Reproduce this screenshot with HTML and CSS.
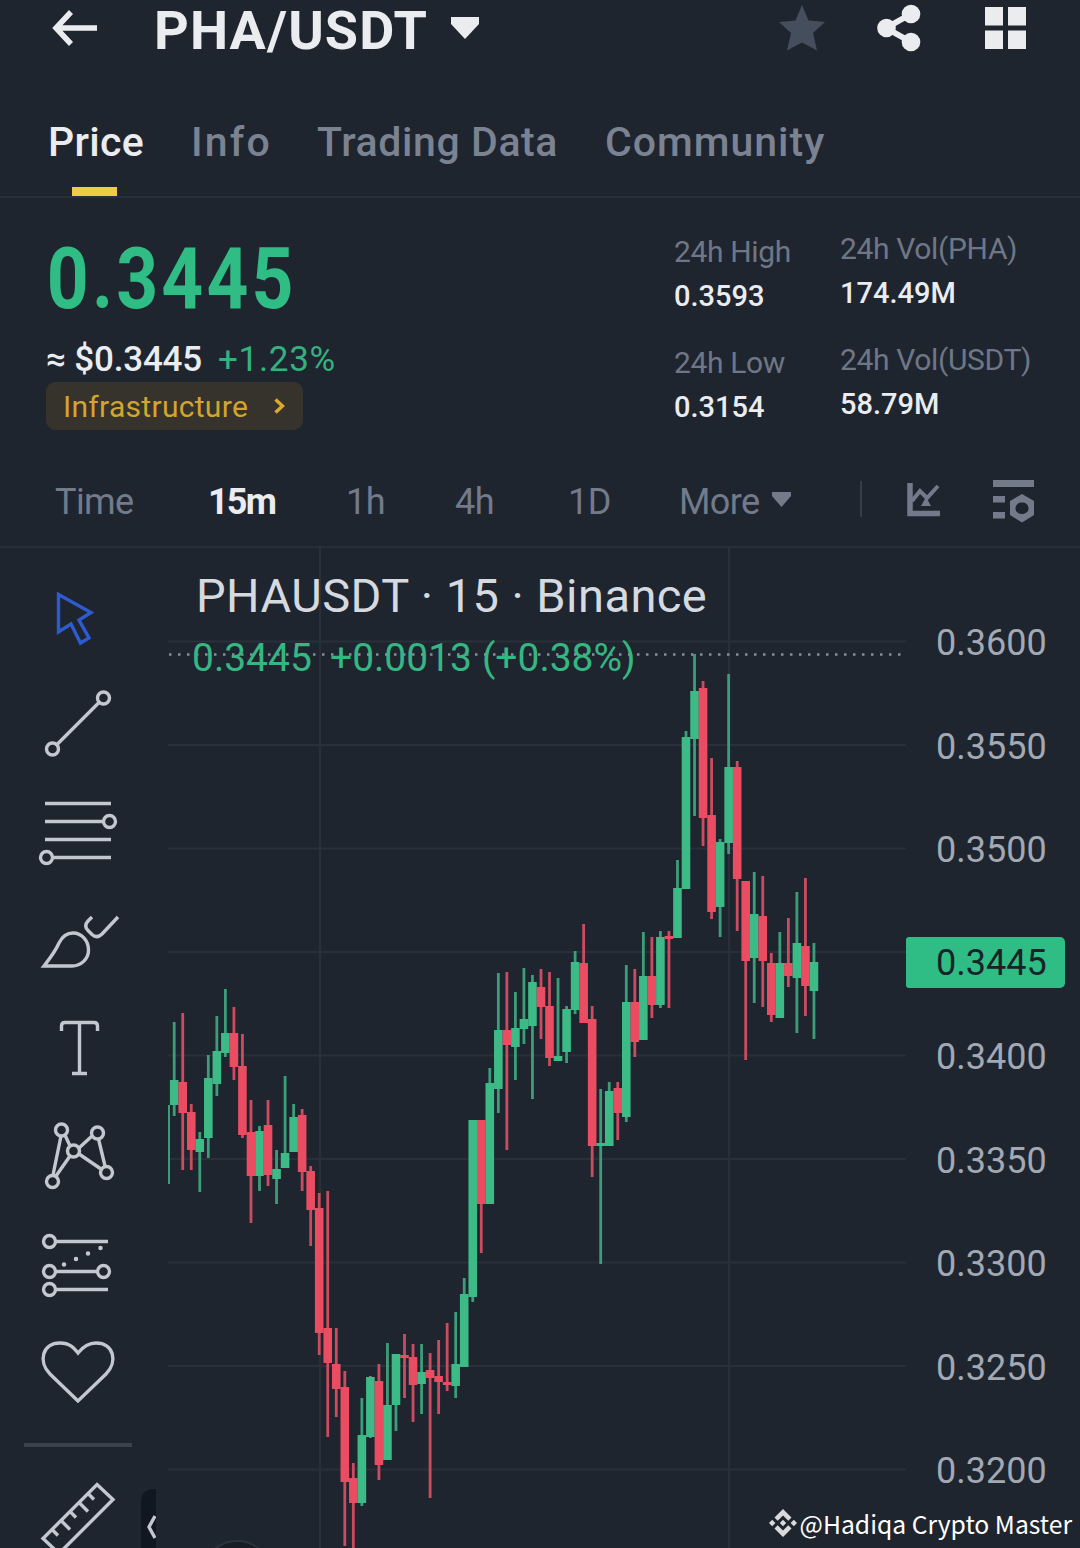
FILE: index.html
```html
<!DOCTYPE html>
<html lang="en">
<head>
    <meta charset="utf-8">
    <title>PHA/USDT</title>
    <link rel="stylesheet" href="styles.css">
</head>
<body>
<div class="header">
    <svg class="back" width="48" height="40" viewBox="0 0 48 40"><path d="M20 4 L5 20 L20 36 M5 20 H46" fill="none" stroke="#eaecef" stroke-width="5.5"/></svg>
    <h1>PHA/USDT</h1>
    <svg class="caret" width="28" height="22" viewBox="0 0 28 22"><path d="M0 0H28V7L14 22L0 7Z" fill="#eaecef"/></svg>
    <div class="actions">
        <svg width="46" height="48" viewBox="0 0 46 48"><path d="M23 1L29.5 16.5L46 18L34 29L38 46.500L23 38.500L8 46.500L12 29L0 18L16.500 16.500Z" fill="#454e5c"/></svg>
        <svg width="44" height="48" viewBox="0 0 44 48"><path d="M34 10L9 24L34 38" fill="none" stroke="#eaecef" stroke-width="6"/><circle cx="34" cy="10" r="9.300" fill="#eaecef"/><circle cx="9.500" cy="24" r="9.300" fill="#eaecef"/><circle cx="34" cy="38" r="9.300" fill="#eaecef"/></svg>
        <svg width="41" height="42" viewBox="0 0 41 42"><path d="M0 0H18V18.500H0ZM23 0H41V18.500H23ZM0 23.500H18V42H0ZM23 23.500H41V42H23Z" fill="#eaecef"/></svg>
    </div>
</div>

<div class="tabs">
    <div class="tab active">Price</div>
    <div class="tab info">Info</div>
    <div class="tab">Trading Data</div>
    <div class="tab community">Community</div>
</div>

<div class="summary">
    <div class="price-box">
        <div class="price">0.3445</div>
        <div class="sub"><span class="usd">≈ $0.3445</span><span class="change">+1.23%</span></div>
        <div class="tag"><span>Infrastructure</span><svg width="11" height="16" viewBox="0 0 11 16"><path d="M1.500 1.500L8.500 8L1.500 14.500" fill="none" stroke="#dba92c" stroke-width="3.500"/></svg></div>
    </div>
    <div class="stats">
        <div class="label">24h High</div>
        <div class="value">0.3593</div>
        <div class="label second">24h Low</div>
        <div class="value">0.3154</div>
    </div>
    <div class="stats vol">
        <div class="label">24h Vol(PHA)</div>
        <div class="value">174.49M</div>
        <div class="label second">24h Vol(USDT)</div>
        <div class="value">58.79M</div>
    </div>
</div>

<div class="intervals">
    <span>Time</span>
    <span class="active">15m</span>
    <span>1h</span>
    <span>4h</span>
    <span>1D</span>
    <span>More</span>
    <svg class="more" width="19" height="15" viewBox="0 0 19 15"><path d="M0 0H19V4L9.500 15L0 4Z" fill="#737b8b"/></svg>
    <i class="sep"></i>
    <svg class="study" width="34" height="36" viewBox="0 0 34 36"><path d="M3 1V31.500H33" fill="none" stroke="#737b8b" stroke-width="5.500"/><path d="M5 19L13 9L20 16L31 4" fill="none" stroke="#737b8b" stroke-width="4"/><path d="M19 15L24 24H14Z" fill="#737b8b"/></svg>
    <svg width="42" height="44" viewBox="0 0 42 44"><path d="M0 1H41V8H0ZM0 17H12V23.500H0ZM0 33H12V39.500H0Z" fill="#737b8b"/><path fill-rule="evenodd" d="M29 15L41 22V36L29 43.500L17 36V22ZM29 23.500A5.800 5.800 0 1 0 29 35A5.800 5.800 0 1 0 29 23.500Z" fill="#737b8b"/></svg>
</div>

<div class="chart">
    <div class="tools">
        <svg height="122" viewBox="0 548 168 122"><path class="cursor" d="M58.500 594.500L91 612.500L79 620L89 638L80.500 643L71 624L58.500 632Z"/></svg>
        <svg height="110" viewBox="0 670 168 110"><path d="M57 744.500L99 702.500"/><circle cx="103.500" cy="698" r="6"/><circle cx="52.500" cy="749" r="6"/></svg>
        <svg height="110" viewBox="0 780 168 110"><path d="M45 803.500H111M45 821.500H103M45 839.500H111M53 857.500H111"/><circle cx="109.500" cy="821.500" r="6"/><circle cx="46.500" cy="857.500" r="6"/></svg>
        <svg height="110" viewBox="0 890 168 110"><path d="M44 966C51 957 56 950 59 943C63 935 68 933 73 933C82 933 88.500 941 88.500 950C88.500 959 81 966 72 966Z"/><path d="M92 917L88 921Q83.500 926 88 930.500L92 934.500Q97 939 102 934L118 917"/></svg>
        <svg height="100" viewBox="0 1000 168 100"><path d="M61.500 1031V1026Q61.500 1022.500 65 1022.500H94Q97.500 1022.500 97.500 1026V1031M79.500 1023V1073M72 1073.500H87"/></svg>
        <svg height="110" viewBox="0 1100 168 110"><path d="M65 1135L70 1146M61 1136L53 1175M70 1156L56 1176M79 1148L92 1136M79 1154L101 1169M98.500 1139L105 1166"/><circle cx="61.500" cy="1130" r="6"/><circle cx="97.500" cy="1133" r="6"/><circle cx="73.500" cy="1151" r="6"/><circle cx="52.500" cy="1181.500" r="6"/><circle cx="106.500" cy="1172.500" r="6"/></svg>
        <svg height="110" viewBox="0 1210 168 110"><path d="M56 1241.500H108M56 1271.500H97M56 1289.500H108"/><circle cx="49.500" cy="1241.500" r="6"/><circle cx="49.500" cy="1271.500" r="6"/><circle cx="103.500" cy="1271.500" r="6"/><circle cx="49.500" cy="1289.500" r="6"/><path class="dots" d="M64 1264.500h0M76 1259h0M88 1253.500h0M100.500 1248h0"/></svg>
        <svg height="110" viewBox="0 1320 168 110"><path d="M78 1401L50 1374C38 1362 42 1343 60 1343C70 1343 74 1348 78 1353C82 1348 87 1343 96 1343C114 1343 118 1362 106 1374Z"/></svg>
        <hr>
        <svg height="101" viewBox="0 1447 168 101"><path d="M97 1484.500L113 1499.500L59 1553.500L43 1538.500ZM52 1529.500L58 1535.500M61 1520.500L70 1529.500M70 1511.500L76 1517.500M79 1502.500L88 1511.500M88 1493.500L94 1499.500"/></svg>
        <div class="collapse"><svg width="9" height="24" viewBox="0 0 9 24"><path d="M8 1L2 12L8 23"/></svg></div>
    </div>
    <div class="plot">
        <svg id="candles" width="738" height="1000" viewBox="168 548 738 1000"></svg>
        <div class="legend">
            <div class="symbol">PHAUSDT · 15 · Binance</div>
            <div class="quote"><span>0.3445</span><span>+0.0013</span><span>(+0.38%)</span></div>
        </div>
    </div>
    <div class="axis">
        <div>0.3600</div>
        <div>0.3550</div>
        <div>0.3500</div>
        <div class="current"><b>0.3445</b></div>
        <div>0.3400</div>
        <div>0.3350</div>
        <div>0.3300</div>
        <div>0.3250</div>
        <div>0.3200</div>
    </div>
</div>

<div class="watermark">
    <svg width="28" height="28" viewBox="0 0 28 28"><path d="M14 0L22.500 8.500L19.300 11.700L14 6.400L8.700 11.700L5.500 8.500ZM14 28L5.500 19.500L8.700 16.300L14 21.600L19.300 16.300L22.500 19.500ZM14 10.800L17.200 14L14 17.200L10.800 14ZM3.200 10.800L6.400 14L3.200 17.200L0 14ZM24.800 10.800L28 14L24.800 17.200L21.600 14Z" fill="#d9dadc"/></svg>
    <span>@Hadiqa Crypto Master</span>
</div>

<script>
    // direction, high, body top, body bottom, low
    var candles = [
        ['g',1022,1080,1105,1116],['r',1013,1082,1113,1170],['r',1104,1112,1150,1170],['g',1132,1139,1152,1192],
        ['g',1055,1078,1138,1158],['g',1016,1051,1084,1096],['g',989,1033,1053,1057],['r',1007,1033,1067,1080],
        ['r',1034,1066,1135,1138],['r',1100,1132,1176,1223],['g',1126,1131,1176,1191],['r',1100,1125,1175,1186],
        ['g',1150,1169,1179,1204],['g',1076,1153,1168,1168],['g',1104,1117,1152,1152],['r',1109,1115,1172,1191],
        ['r',1166,1171,1210,1246],['r',1193,1208,1333,1355],['r',1191,1328,1363,1437],['r',1328,1364,1389,1417],
        ['r',1371,1387,1482,1546],['r',1463,1478,1503,1550],['g',1398,1435,1503,1506],['g',1376,1377,1437,1438],
        ['r',1364,1381,1465,1480],['g',1343,1405,1460,1460],['g',1354,1354,1405,1431],['r',1334,1355,1358,1398],
        ['r',1344,1357,1385,1422],['g',1344,1372,1384,1414],['r',1353,1370,1378,1498],['r',1340,1376,1382,1414],
        ['r',1323,1382,1385,1391],['g',1312,1364,1386,1398],['g',1278,1294,1367,1367],['g',1120,1120,1297,1302],
        ['r',1120,1120,1204,1253],['g',1068,1083,1204,1204],['g',973,1030,1089,1113],['r',972,1030,1045,1150],
        ['g',992,1028,1047,1080],['g',968,1019,1029,1044],['g',975,982,1026,1099],['r',969,987,1007,1039],
        ['r',972,1006,1058,1066],['g',978,1056,1061,1061],['g',1006,1009,1052,1063],['g',951,962,1010,1014],
        ['r',924,963,1023,1023],['r',1006,1019,1146,1177],['g',1089,1143,1146,1264],['g',1082,1091,1146,1146],
        ['r',1082,1088,1113,1140],['g',965,1002,1117,1122],['r',969,1002,1042,1057],['g',932,976,1040,1040],
        ['r',937,976,1005,1018],['g',931,937,1005,1008],['r',931,936,939,1008],['g',860,888,938,938],
        ['g',731,737,889,889],['g',654,691,739,816],['r',681,688,818,846],['r',758,815,912,919],
        ['g',839,842,907,937],['g',674,767,843,854],['r',761,767,879,931],['r',881,881,961,1060],
        ['g',872,914,958,1003],['r',876,916,961,1007],['r',953,963,1015,1022],['g',932,963,1018,1018],
        ['r',918,963,976,987],['g',892,943,978,1033],['r',878,946,986,1016],['g',943,962,991,1039]
    ];
    var out = '';
    for (var n = 0; n < 9; n++) {
        out += '<rect class="grid" x="168" y="' + (640.5 + n * 103.5) + '" width="738" height="2"/>';
    }
    out += '<rect class="grid" x="319" y="548" width="2" height="1000"/>';
    out += '<rect class="grid" x="728" y="548" width="2" height="1000"/>';
    out += '<path class="high" d="M169 654.500H903"/>';
    out += '<circle class="logo" cx="237" cy="1576" r="35"/>';
    out += '<rect class="g wick" x="168" y="1105" width="2" height="79"/>';
    candles.forEach(function(c, i) {
        var x = 174.2 + i * 8.53;
        out += '<rect class="' + c[0] + ' wick" x="' + (x - 1.4) + '" y="' + c[1] + '" width="2.8" height="' + (c[4] - c[1]) + '"/>';
        out += '<rect class="' + c[0] + '" x="' + (x - 4.3) + '" y="' + c[2] + '" width="8.6" height="' + (c[3] - c[2]) + '"/>';
    });
    document.getElementById('candles').innerHTML = out;
</script>
</body>
</html>
```
FILE: styles.css
```css
body {
    margin: 0;
    width: 1080px;
    height: 1548px;
    overflow: hidden;
    position: relative;
    background-color: #1e252f;
    color: #eaecef;
    font-family: Roboto, sans-serif;
}

svg {
    display: block;
    flex: none;
}

.header {
    display: flex;
    align-items: center;
    height: 61px;
    padding: 0 54px 0 51px;
}

.back {
    margin-top: -5px;
}

h1 {
    margin: 0 0 0 55px;
    width: 297px;
    font-size: 54px;
    line-height: 61px;
    font-weight: 700;
    letter-spacing: 1.1px;
}

.caret {
    margin-top: -5px;
}

.actions {
    display: flex;
    align-items: center;
    margin-left: auto;
    margin-top: -5px;
}

.actions svg + svg {
    margin-left: 52px;
}

.actions svg:last-child {
    margin-left: 64px;
}

.tabs {
    display: grid;
    grid-template-columns: 143px 126px 288px auto;
    height: 79px;
    padding: 56px 0 0 48px;
    border-bottom: 2px solid #28303a;
    font-size: 41px;
    line-height: 50px;
    font-weight: 500;
    letter-spacing: 0.6px;
    color: #7b8291;
}

.tab {
    white-space: nowrap;
}

.tab.info {
    letter-spacing: 2.2px;
}

.tab.community {
    letter-spacing: 1px;
}

.tab.active {
    color: #eaecef;
    letter-spacing: 0.3px;
}

.tab.active:after {
    content: "";
    display: block;
    width: 45px;
    height: 9px;
    margin: 20px 0 0 24px;
    background-color: #f0cc45;
}

.summary {
    display: flex;
    height: 258px;
}

.price-box {
    width: 628px;
    padding: 41px 0 0 46px;
}

.price {
    padding-left: 1px;
    font-size: 86px;
    line-height: 80px;
    font-weight: 700;
    letter-spacing: 3.7px;
    color: #2fbd85;
    transform: scaleX(0.85);
    transform-origin: left;
}

.sub {
    display: flex;
    margin-top: 17px;
    font-size: 35px;
    line-height: 48px;
    font-weight: 500;
    letter-spacing: -0.2px;
}

.usd {
    width: 172px;
}

.change {
    color: #33b27f;
    font-weight: 400;
    letter-spacing: 0.7px;
}

.tag {
    display: flex;
    align-items: center;
    justify-content: space-between;
    box-sizing: border-box;
    width: 257px;
    height: 48px;
    margin-top: -2px;
    padding: 0 18px 0 17px;
    border-radius: 9px;
    background-color: #35332b;
    color: #d3a42f;
    font-size: 30px;
    letter-spacing: 0.3px;
}

.stats {
    width: 166px;
    padding-top: 32px;
    line-height: 44px;
    white-space: nowrap;
}

.stats.vol {
    padding-top: 29px;
}

.label {
    font-size: 30px;
    letter-spacing: -0.35px;
    color: #6f7786;
}

.label.second {
    margin-top: 23px;
}

.value {
    font-size: 29px;
    font-weight: 500;
}

.intervals {
    display: grid;
    grid-template-columns: 153px 138px 109px 113px 111px 93px 88px 47px 86px auto;
    align-items: center;
    height: 90px;
    padding-left: 55px;
    border-bottom: 2px solid #272e39;
    font-size: 36px;
    letter-spacing: -0.6px;
    color: #737b8b;
}

.intervals span {
    padding-top: 2px;
}

.intervals .active {
    color: #eaecef;
    font-weight: 700;
    letter-spacing: -1.8px;
}

.intervals .more {
    margin-top: -4px;
}

.intervals .study {
    margin-top: -3px;
}

.sep {
    width: 2px;
    height: 36px;
    margin-top: -5px;
    background-color: #363e4a;
}

.chart {
    display: flex;
    height: 1000px;
}

.tools {
    position: relative;
    width: 168px;
    overflow: hidden;
}

.tools svg {
    fill: none;
    stroke: #c3c8d0;
    stroke-width: 3.4;
}

.tools > svg {
    width: 168px;
}

.tools .cursor {
    stroke: #2f5bd0;
}

.tools .dots {
    stroke-width: 4.5;
    stroke-linecap: round;
}

.tools hr {
    width: 108px;
    height: 4px;
    margin: 13px 0 0 24px;
    border: none;
    background-color: #3b424d;
}

.collapse {
    position: absolute;
    left: 141px;
    bottom: 0;
    width: 9px;
    height: 33px;
    padding: 26px 0 0 6px;
    border-radius: 12px 0 0 0;
    background-color: #111720;
}

.plot {
    position: relative;
    width: 738px;
}

.g {
    fill: #3dbb87;
}

.r {
    fill: #ea4d62;
}

.g.wick {
    fill: #3c9e78;
}

.r.wick {
    fill: #cb4c60;
}

.grid {
    fill: #29303a;
}

.high {
    stroke: #878e98;
    stroke-width: 2.5;
    stroke-dasharray: 2.5 6.5;
}

.logo {
    fill: #171c25;
    stroke: #2b323d;
    stroke-width: 2;
}

.legend {
    position: absolute;
    left: 24px;
    top: 20px;
    white-space: nowrap;
}

.symbol {
    padding-left: 4px;
    font-size: 47px;
    line-height: 56px;
    letter-spacing: 0.45px;
    color: #d5d9e0;
}

.quote {
    display: grid;
    grid-template-columns: 138px 152px auto;
    margin-top: 6px;
    font-size: 39px;
    line-height: 56px;
    color: #36b682;
}

.axis {
    width: 174px;
    padding-top: 44px;
    font-size: 36px;
    line-height: 103.5px;
    color: #a3a9b3;
}

.axis div {
    height: 103.5px;
    padding-left: 30px;
}

.axis .current {
    padding: 34px 0 0;
    box-sizing: border-box;
}

.current b {
    display: block;
    width: 129px;
    padding: 2px 0 0 30px;
    border-radius: 3px 5px 5px 3px;
    background-color: #2fbd85;
    color: #17232a;
    font-weight: 400;
    line-height: 49px;
}

.watermark {
    position: absolute;
    right: 8px;
    top: 1504px;
    display: flex;
    align-items: center;
    gap: 3px;
    font-family: "Noto Sans CJK SC", "Noto Sans", sans-serif;
    font-size: 24.7px;
    line-height: 38px;
    color: #fff;
    white-space: nowrap;
}
```
